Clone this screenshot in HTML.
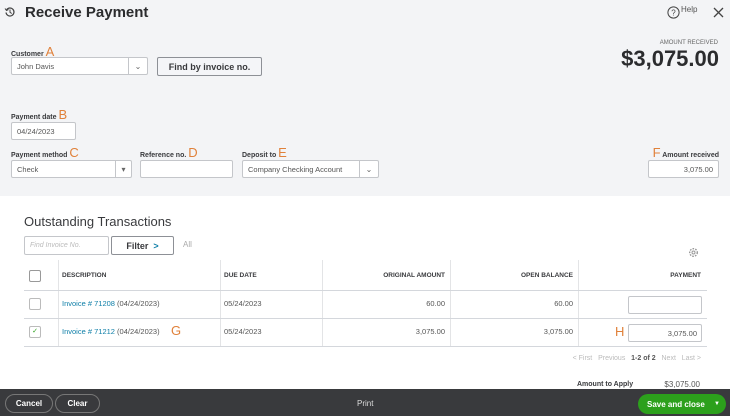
<!DOCTYPE html>
<html><head><style>
*{box-sizing:border-box;margin:0;padding:0}
body{width:730px;height:416px;overflow:hidden;font-family:"Liberation Sans",sans-serif;background:#fff;position:relative;color:#393a3d}
.a{position:absolute}
.top{left:0;top:0;width:730px;height:196px;background:#f3f4f6}
.lbl{font-size:7px;font-weight:bold;color:#393a3d}
.or{color:#e0813a;font-size:13px;font-weight:normal}
.inp{background:#fff;border:1px solid #c4c6ca;border-radius:2px;font-size:7.5px;color:#555;padding-left:5px;display:flex;align-items:center}
.dd{position:absolute;right:0;top:0;bottom:0;border-left:1px solid #c4c6ca;display:flex;align-items:center;justify-content:center;font-size:8px;color:#666}
.th{font-size:6.5px;font-weight:bold;color:#393a3d}
.td{font-size:7.5px;color:#555}
.vl{width:1px;background:#e3e4e6;top:260px;height:86px}
.hl{height:1px;background:#d4d7dc;left:24px;width:683px}
.cb{width:12px;height:12px;border:1px solid #999;border-radius:2px;background:#fff}
.lnk{color:#0f7fa8}
.pill{border:1px solid #777;border-radius:11px;color:#fff;font-size:8px;font-weight:bold;display:flex;align-items:center;justify-content:center}
</style></head><body>
<div class="a top"></div>
<svg class="a" style="left:4px;top:6px" width="12" height="12" viewBox="0 0 12 12"><path d="M2.5 4A4 4 0 1 1 2 6.5" fill="none" stroke="#444" stroke-width="1.2"/><path d="M1 2.5L2.5 4.5 4.5 3.5" fill="none" stroke="#444" stroke-width="1"/><path d="M6 3.5V6.3L7.8 7.5" fill="none" stroke="#444" stroke-width="1"/></svg>
<div class="a" style="left:25px;top:4px;font-size:15px;font-weight:bold;color:#2b2c2e">Receive Payment</div>
<svg class="a" style="left:667px;top:6px" width="13" height="13" viewBox="0 0 13 13"><circle cx="6.5" cy="6.5" r="5.6" fill="none" stroke="#444" stroke-width="1"/><text x="6.5" y="9.3" font-size="8" text-anchor="middle" fill="#444" font-family="Liberation Sans">?</text></svg>
<div class="a" style="left:681px;top:5px;font-size:8px;color:#555">Help</div>
<svg class="a" style="left:713px;top:7px" width="11" height="11" viewBox="0 0 11 11"><path d="M1 1L10 10M10 1L1 10" stroke="#444" stroke-width="1.3"/></svg>
<div class="a" style="right:12px;top:40px;font-size:6px;color:#666">AMOUNT RECEIVED</div>
<div class="a" style="right:11px;top:46px;font-size:22px;font-weight:bold;color:#2b2c2e">$3,075.00</div>

<div class="a lbl" style="left:11px;top:44px">Customer <span class="or">A</span></div>
<div class="a inp" style="left:11px;top:57px;width:137px;height:18px">John Davis<div class="dd" style="width:19px">&#8964;</div></div>
<div class="a" style="left:157px;top:57px;width:105px;height:19px;border:1px solid #8d9096;border-radius:2px;background:#f4f5f8;font-size:9px;font-weight:bold;display:flex;align-items:center;justify-content:center;color:#393a3d">Find by invoice no.</div>

<div class="a lbl" style="left:11px;top:107px">Payment date <span class="or">B</span></div>
<div class="a inp" style="left:11px;top:122px;width:65px;height:18px">04/24/2023</div>

<div class="a lbl" style="left:11px;top:145px">Payment method <span class="or">C</span></div>
<div class="a inp" style="left:11px;top:160px;width:121px;height:18px">Check<div class="dd" style="width:16px">&#9662;</div></div>
<div class="a lbl" style="left:140px;top:145px">Reference no. <span class="or">D</span></div>
<div class="a inp" style="left:140px;top:160px;width:93px;height:18px"></div>
<div class="a lbl" style="left:242px;top:145px">Deposit to <span class="or">E</span></div>
<div class="a inp" style="left:242px;top:160px;width:137px;height:18px">Company Checking Account<div class="dd" style="width:19px">&#8964;</div></div>
<div class="a lbl" style="right:11px;top:145px"><span class="or">F</span> Amount received</div>
<div class="a inp" style="left:648px;top:160px;width:71px;height:18px;justify-content:flex-end;padding-right:5px">3,075.00</div>

<div class="a" style="left:24px;top:214px;font-size:13px;color:#393a3d">Outstanding Transactions</div>
<div class="a inp" style="left:24px;top:236px;width:85px;height:19px;font-style:italic;color:#bbb;font-size:7px">Find Invoice No.</div>
<div class="a" style="left:111px;top:236px;width:63px;height:19px;border:1px solid #8d9096;border-radius:2px;font-size:9px;font-weight:bold;display:flex;align-items:center;justify-content:center">Filter &nbsp;<span style="color:#0f7fa8">&gt;</span></div>
<div class="a" style="left:183px;top:240px;font-size:8px;color:#aaa">All</div>
<svg class="a" style="left:688px;top:247px" width="11" height="11" viewBox="0 0 11 11"><circle cx="5.5" cy="5.5" r="3.8" fill="none" stroke="#999" stroke-width="1.4" stroke-dasharray="1.6 1.2"/><circle cx="5.5" cy="5.5" r="1.5" fill="none" stroke="#999"/></svg>

<div class="a vl" style="left:58px"></div><div class="a vl" style="left:220px"></div><div class="a vl" style="left:322px"></div><div class="a vl" style="left:450px"></div><div class="a vl" style="left:578px"></div>
<div class="a hl" style="top:290px"></div><div class="a hl" style="top:318px"></div><div class="a hl" style="top:346px"></div>
<div class="a cb" style="left:29px;top:270px"></div>
<div class="a th" style="left:62px;top:272px">DESCRIPTION</div>
<div class="a th" style="left:224px;top:272px">DUE DATE</div>
<div class="a th" style="right:285px;top:272px">ORIGINAL AMOUNT</div>
<div class="a th" style="right:157px;top:272px">OPEN BALANCE</div>
<div class="a th" style="right:29px;top:272px">PAYMENT</div>

<div class="a cb" style="left:29px;top:298px;border-color:#bbb"></div>
<div class="a td" style="left:62px;top:299px"><span class="lnk">Invoice # 71208</span> (04/24/2023)</div>
<div class="a td" style="left:224px;top:299px">05/24/2023</div>
<div class="a td" style="right:285px;top:299px">60.00</div>
<div class="a td" style="right:157px;top:299px">60.00</div>
<div class="a inp" style="left:628px;top:296px;width:74px;height:18px"></div>

<div class="a cb" style="left:29px;top:326px;border-color:#bbb;font-size:7px;color:#2ca01c;text-align:center;line-height:10px">&#10003;</div>
<div class="a td" style="left:62px;top:327px"><span class="lnk">Invoice # 71212</span> (04/24/2023)</div>
<div class="a or" style="left:171px;top:323px">G</div>
<div class="a td" style="left:224px;top:327px">05/24/2023</div>
<div class="a td" style="right:285px;top:327px">3,075.00</div>
<div class="a td" style="right:157px;top:327px">3,075.00</div>
<div class="a or" style="left:615px;top:324px">H</div>
<div class="a inp" style="left:628px;top:324px;width:74px;height:18px;justify-content:flex-end;padding-right:4px">3,075.00</div>

<div class="a" style="right:29px;top:355px;font-size:7px;color:#bbb">&lt; First &nbsp; Previous &nbsp; <b style="color:#555">1-2 of 2</b> &nbsp; Next &nbsp; Last &gt;</div>
<div class="a" style="left:577px;top:381px;font-size:7px;font-weight:bold;color:#393a3d">Amount to Apply</div>
<div class="a" style="right:30px;top:380px;font-size:8px;color:#555">$3,075.00</div>

<div class="a" style="left:0;top:389px;width:730px;height:27px;background:#393a3d"></div>
<div class="a pill" style="left:5px;top:394px;width:48px;height:19px">Cancel</div>
<div class="a pill" style="left:55px;top:394px;width:45px;height:19px">Clear</div>
<div class="a" style="left:357px;top:399px;font-size:8px;color:#ddd">Print</div>
<div class="a" style="left:638px;top:394px;width:88px;height:20px;background:#2ca01c;border-radius:10px;color:#fff;font-size:8px;font-weight:bold;display:flex;align-items:center;padding-left:9px">Save and close<span style="position:absolute;right:6px;font-size:6px">&#9660;</span></div>
</body></html>
